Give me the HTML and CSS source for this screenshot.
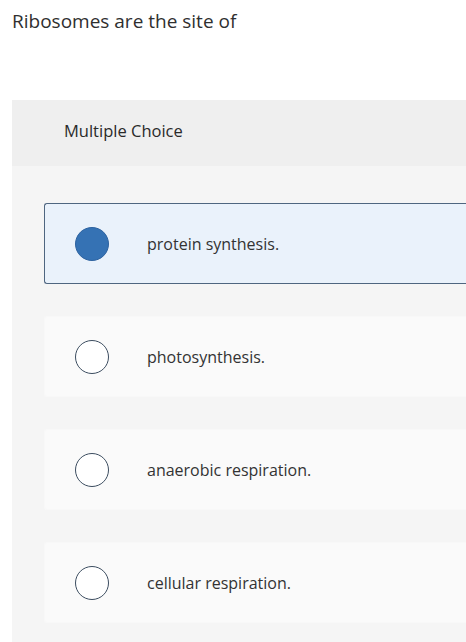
FILE: index.html
```html
<!DOCTYPE html>
<html>
<head>
<meta charset="utf-8">
<link rel="stylesheet" href="styles.css">
</head>
<body>
<p class="question">Ribosomes are the site of</p>
<section class="panel">
  <div class="panel-header">Multiple Choice</div>
  <div class="options">
    <div class="option selected"><span class="radio"></span><span class="label">protein synthesis.</span></div>
    <div class="option"><span class="radio"></span><span class="label">photosynthesis.</span></div>
    <div class="option"><span class="radio"></span><span class="label">anaerobic respiration.</span></div>
    <div class="option"><span class="radio"></span><span class="label">cellular respiration.</span></div>
  </div>
</section>
</body>
</html>
```
FILE: styles.css
```css
html, body {
  margin: 0;
  padding: 0;
  background: #ffffff;
}
body {
  font-family: "Open Sans", "Liberation Sans", sans-serif;
  color: #2f2f2f;
}
.question {
  margin: 0;
  padding: 8px 0 0 12px;
  font-size: 19px;
  line-height: 26px;
  height: 92px;
}
.panel {
  margin-left: 12px;
  background: #f5f5f5;
  padding-bottom: 40px;
}
.panel-header {
  height: 66px;
  box-sizing: border-box;
  background: #efefef;
  padding: 19px 0 0 52px;
  font-size: 16.5px;
  line-height: 24px;
  color: #2a2a2a;
}
.options {
  display: flex;
  flex-direction: column;
  gap: 32px;
  padding: 37px 0 0 32px;
}
.option {
  height: 81px;
  box-sizing: border-box;
  background: #fafafa;
  border: 1px solid #f8f8f8;
  border-right: none;
  border-radius: 3px 0 0 3px;
  display: flex;
  align-items: center;
  padding-left: 30px;
  font-size: 16px;
  color: #333333;
}
.option.selected {
  background: #eaf2fb;
  border-color: #4f6680;
}
.radio {
  width: 34px;
  height: 34px;
  box-sizing: border-box;
  border-radius: 50%;
  border: 1.5px solid #3c4d60;
  background: #ffffff;
  flex: none;
  margin-right: 38px;
}
.selected .radio {
  background: #3572b4;
  border-color: #2e63a0;
}
```
